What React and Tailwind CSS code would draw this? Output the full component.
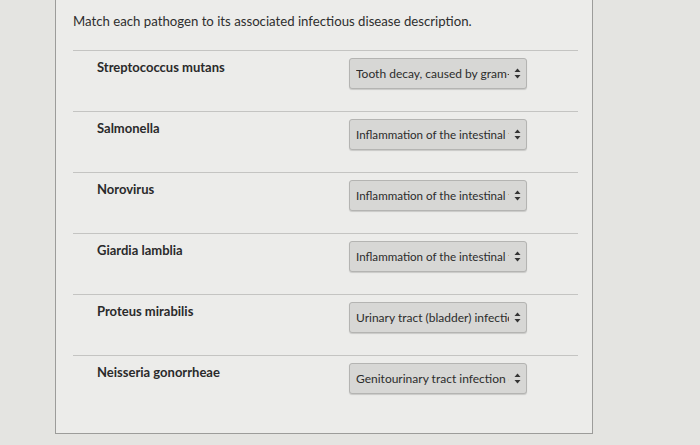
import React from "react";

const rows = [
  ["Streptococcus mutans", "Tooth decay, caused by gram-positive bacteria", "text-[12px]"],
  ["Salmonella", "Inflammation of the intestinal tract", "text-[11.6px]"],
  ["Norovirus", "Inflammation of the intestinal tract", "text-[11.6px]"],
  ["Giardia lamblia", "Inflammation of the intestinal tract", "text-[11.6px]"],
  ["Proteus mirabilis", "Urinary tract (bladder) infection", "text-[12px]"],
  ["Neisseria gonorrheae", "Genitourinary tract infection caused", "text-[12px]"],
];

function Arrows() {
  return (
    <svg width="7" height="11" viewBox="0 0 7 11" className="shrink-0">
      <path d="M3.5 0.5 L6.5 4 L0.5 4 Z" fill="#333" />
      <path d="M3.5 10.5 L6.5 7 L0.5 7 Z" fill="#333" />
    </svg>
  );
}

export default function App() {
  return (
    <div
      className="w-[700px] h-[445px] overflow-hidden bg-[#e4e4e1] flex"
      style={{ fontFamily: "Lato, 'Open Sans', sans-serif" }}
    >
      <div className="ml-[55px] w-[538px] h-[434px] bg-[#ececea] border-l border-r border-b border-[#9c9c9a] pl-[17px] pr-[14px] flex flex-col">
        <div className="pt-[12px] h-[50px] text-[13.2px] text-[#2e2e2e] leading-[18px]">
          Match each pathogen to its associated infectious disease description.
        </div>
        {rows.map(([name, desc, size], i) => (
          <div
            key={i}
            className="h-[61px] border-t border-[#c4c4c2] flex items-start pt-[7px]"
          >
            <div className="w-[276px] pl-[24px] text-[13px] font-bold text-[#2a2a2a] leading-[18px]">
              {name}
            </div>
            <div className="w-[178px] h-[31px] rounded-[3px] border border-[#b4b4b2] bg-[#d7d7d5] shadow-[0_1px_1px_rgba(0,0,0,0.15)] flex items-center pl-[6px] pr-[5px] gap-[5px]">
              <div className={`flex-1 overflow-hidden whitespace-nowrap ${size} text-[#2c2c2c] leading-[16px]`}>
                {desc}
              </div>
              <Arrows />
            </div>
          </div>
        ))}
      </div>
    </div>
  );
}
